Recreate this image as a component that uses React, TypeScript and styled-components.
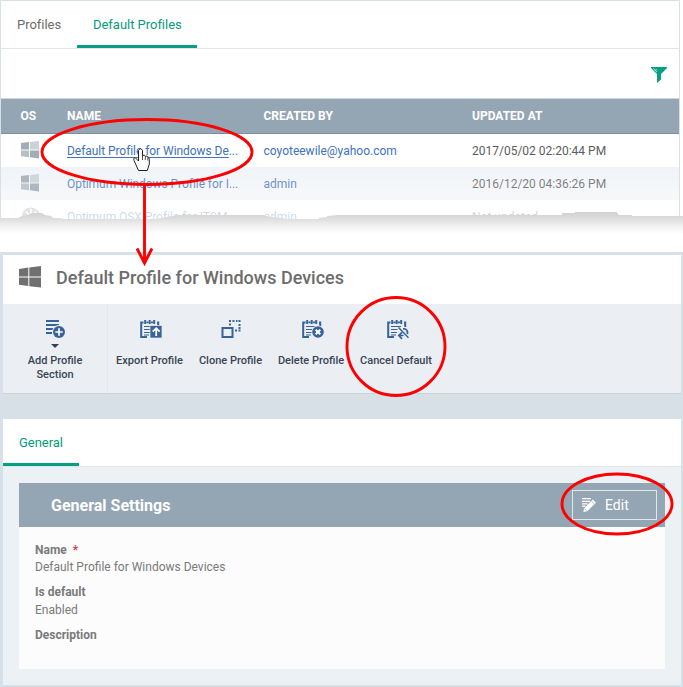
import React from "react";
import styled, { createGlobalStyle } from "styled-components";

const Global = createGlobalStyle`
  * { box-sizing: border-box; }
  html, body { margin: 0; padding: 0; background: #fff; }
  body { font-family: Roboto, "Liberation Sans", sans-serif; overflow: hidden; }
  svg { display: block; flex: none; }
`;

const Page = styled.div`
  position: relative;
  width: 683px;
  height: 687px;
  overflow: hidden;
  display: flex;
  flex-direction: column;
  background: #fff;
`;

const ListPanel = styled.section`
  width: 680px;
  height: 218px;
  margin-bottom: 34px;
  border: 1px solid #d7dfe7;
  border-bottom: 0;
  background: #fff;
`;

const TabBar = styled.nav`
  display: flex;
  height: 48px;
  background: #fff;
  border-bottom: 1px solid #e3e6e8;
`;

const Tab = styled.div<{ $active?: boolean; $width: number }>`
  width: ${(p) => p.$width}px;
  height: 47px;
  padding-left: 16px;
  font-size: 13px;
  line-height: 47px;
  letter-spacing: -0.03px;
  color: ${(p) => (p.$active ? "#069b7d" : "#6c6c6c")};
  border-bottom: ${(p) => (p.$active ? "3px solid #069f82" : "0")};
  white-space: nowrap;
`;

const FilterBar = styled.div`
  height: 50px;
  display: flex;
  align-items: center;
  justify-content: flex-end;
  padding: 2px 12px 0 0;
  border-bottom: 1px solid #cfd7de;
`;

const columns = "66px 196.5px 208.5px 1fr";

const HeadRow = styled.div`
  display: grid;
  grid-template-columns: ${columns};
  height: 35px;
  line-height: 34px;
  background: #94a5b3;
  border-bottom: 1px solid #7890a3;
  color: #fff;
  font-size: 12px;
  font-weight: 700;
`;

const HeadCell = styled.div<{ $first?: boolean }>`
  padding-left: ${(p) => (p.$first ? 19.5 : 0)}px;
`;

const Row = styled.div<{ $fade: number; $bg: string }>`
  display: grid;
  grid-template-columns: ${columns};
  height: 33px;
  line-height: 35px;
  font-size: 12px;
  background: ${(p) => p.$bg};
  color: rgba(92, 92, 92, ${(p) => p.$fade});
  --link: rgba(62, 114, 188, ${(p) => p.$fade});
`;

const IconCell = styled.div`
  padding: 7px 0 0 20px;
  height: 33px;
`;

const LinkCell = styled.div<{ $underline?: boolean; $tight?: boolean }>`
  color: var(--link);
  letter-spacing: ${(p) => (p.$tight ? -0.055 : 0)}px;
  white-space: nowrap;
  span { text-decoration: ${(p) => (p.$underline ? "underline" : "none")}; text-underline-offset: 2px; }
`;

const DateCell = styled.div``;

const Detail = styled.section`
  width: 683px;
  height: 435px;
  padding: 3px 2px 2px 3px;
  background: #d8e0e7;
`;

const TitleBar = styled.header`
  display: flex;
  height: 49px;
  padding: 0 0 5px 16px;
  align-items: center;
  gap: 15px;
  background: #fff;
`;

const Title = styled.h1`
  margin: 0;
  font-size: 18px;
  font-weight: 500;
  color: #6c6c6c;
`;

const Toolbar = styled.div`
  display: flex;
  height: 90px;
  background: #ebeff4;
  border-bottom: 1px solid #c9d3da;
`;

const Action = styled.div<{ $width: number; $divider?: boolean }>`
  width: ${(p) => p.$width}px;
  padding-top: 15px;
  border-right: ${(p) => (p.$divider ? "1px solid #e3e8ed" : "0")};
  display: flex;
  flex-direction: column;
  align-items: center;
  text-align: center;
  font-size: 11px;
  line-height: 14px;
  font-weight: 500;
  color: #3a4452;
  white-space: nowrap;
`;

const ActionIcon = styled.div<{ $nudge?: number }>`
  height: 20px;
  margin-left: ${(p) => p.$nudge ?? 2}px;
`;

const Caret = styled.div`
  width: 0;
  height: 0;
  margin: 5px 0 -9px;
  border: 4px solid transparent;
  border-top-color: #36404e;
  border-bottom: 0;
`;

const ActionLabel = styled.div`
  margin-top: 15px;
`;

const Tabs = styled(TabBar)`
  margin-top: 25px;
`;

const Content = styled.div`
  height: 218px;
  padding: 16px;
  background: #ecf1f5;
`;

const Card = styled.div`
  height: 186px;
  background: #fcfcfc;
`;

const CardHead = styled.div`
  height: 44px;
  display: flex;
  align-items: center;
  justify-content: space-between;
  padding: 0 8px 0 32px;
  background: #94a5b3;
  color: #fff;
  font-size: 16px;
  font-weight: 700;
`;

const EditButton = styled.button`
  width: 85px;
  height: 30px;
  padding: 0 0 0 9px;
  display: flex;
  align-items: center;
  gap: 8px;
  background: transparent;
  border: 1px solid #e2e7ea;
  color: #fff;
  font: 400 14px Roboto, sans-serif;
`;

const Fields = styled.dl`
  margin: 0;
  padding: 15px 16px;
  font-size: 12px;
  line-height: 17px;
  color: #7a7a7a;
`;

const Label = styled.dt<{ $after?: number }>`
  margin-bottom: ${(p) => p.$after || 0}px;
  font-weight: 700;
`;

const Required = styled.span`
  margin-left: 6px;
  color: #d43c3c;
`;

const Value = styled.dd<{ $gap?: number }>`
  margin: 0 0 ${(p) => p.$gap || 0}px;
`;

const Overlay = styled.svg`
  position: absolute;
  left: 0;
  top: 0;
  pointer-events: none;
`;

const WindowsIcon = ({ size, color }: { size: number; color: string }) => (
  <svg width={size} height={size} viewBox="0 0 22 22" fill={color}>
    <path d="M0 3 9.3 1.6V10.4H0ZM10.3 1.4 22 0V10.4H10.3ZM0 11.4H9.3V20L0 18.8ZM10.3 11.4H22V21.6L10.3 20.2Z" />
  </svg>
);

const RowWindows = ({ opacity }: { opacity: number }) => (
  <svg width="18" height="18" viewBox="0 0 18 18" opacity={opacity}>
    <path fill="#a0adb6" d="M0 2 8 1V8.4H0ZM9 9.4H18V17.4L9 16.2Z" />
    <path fill="#b4bfc6" d="M0 9.4H8V16.2L0 15.2Z" />
    <path fill="#cbd2d6" d="M9 .9 18 0V8.4H9Z" />
  </svg>
);

const AppleGlobe = () => (
  <svg width="20" height="20" viewBox="0 0 20 20">
    <circle cx="10" cy="10" r="9.5" fill="#e3e4e5" />
    <path d="M5 4.5 9 9M15 4.5 11 9M10 2V8M3 10H17" stroke="#fff" strokeWidth="1.8" />
  </svg>
);

const Funnel = () => (
  <svg width="16" height="16" viewBox="0 0 16 16">
    <path d="M0 0H16V1L10 7V12.5L6 16V7L0 1Z" fill="#069f82" />
    <path d="M2.3 1.6 6 5.2M4.5 1.8 6 3.5" stroke="#bfe8df" strokeWidth="1" />
  </svg>
);

const BLUE = "#376399";
const BG = "#ebeff4";

const AddIcon = () => (
  <svg width="20" height="20" viewBox="0 0 20 20">
    <path d="M0 2H13M0 6H13M0 10H8M0 14H6" stroke={BLUE} strokeWidth="2" />
    <circle cx="13" cy="13" r="7" fill={BG} />
    <circle cx="13" cy="13" r="6" fill={BLUE} />
    <path d="M13 9.3V16.7M9.3 13H16.7" stroke="#fff" strokeWidth="1.7" />
  </svg>
);

const Notepad = () => (
  <g>
    <path d="M7 18H1.2V3.6H3.5M17 3.6H18.2V8" fill="none" stroke={BLUE} strokeWidth="2" />
    <path d="M5.2 1V5M9.7 1V5M14.2 1V5" stroke={BLUE} strokeWidth="2" />
    <path d="M6.5 3.4H8.7M11 3.4H13.2" stroke={BLUE} strokeWidth="1.6" />
    <path d="M4 7.5H14M4 10.5H13M4 13.5H10M4 16H9" stroke={BLUE} strokeWidth="1.2" />
  </g>
);

const ExportIcon = () => (
  <svg width="22" height="20" viewBox="0 0 22 20">
    <Notepad />
    <path d="M10 6.5H22V19H10Z" fill={BLUE} stroke={BG} strokeWidth=".7" />
    <path d="M16.2 17V9.5M12.7 12.7 16.2 9.2 19.7 12.7" stroke="#fff" strokeWidth="1.8" fill="none" />
  </svg>
);

const CloneIcon = () => (
  <svg width="20" height="20" viewBox="0 0 20 20">
    <path d="M1.5 9H11.5V18H1.5Z" fill="none" stroke={BLUE} strokeWidth="2" />
    <path d="M8 2H10M11.5 2H13.5M15 2H16.5M17.5 2H19.5M17.5 6H19.5M17.5 9H19.5M17.5 11.5H19.5M14 11.5H16M8 5.5H10" fill="none" stroke={BLUE} strokeWidth="1.8" />
  </svg>
);

const DeleteIcon = () => (
  <svg width="22" height="20" viewBox="0 0 22 20">
    <Notepad />
    <circle cx="16" cy="13" r="6.6" fill={BG} />
    <circle cx="16" cy="13" r="5.8" fill={BLUE} />
    <path d="M13.7 10.7 18.3 15.3M18.3 10.7 13.7 15.3" stroke="#fff" strokeWidth="2" />
  </svg>
);

const CancelIcon = () => (
  <svg width="22" height="22" viewBox="0 0 22 22">
    <Notepad />
    <path d="M10.5 9H22V22H10.5Z" fill={BG} />
    <path d="M11.5 8.5 21.5 18.8" stroke={BLUE} strokeWidth="1.5" />
    <path d="M16 9.8H17.5Q21.3 11 20.3 15M12 16.5H16.5M15 13.3 11.8 16.5 15 19.8" fill="none" stroke={BLUE} strokeWidth="1.7" />
  </svg>
);

const EditIcon = () => (
  <svg width="15" height="15" viewBox="0 0 15 15">
    <path d="M0 .7H9M0 3.3H8M0 5.8H5.5M0 8.2H3.5" stroke="#fff" strokeWidth="1.2" />
    <path d="M1.3 14 2.2 10.2 10.8 1.6 14 4.8 5.2 13.3Z" fill="#fff" />
    <path d="M9.4 3 12.6 6.2M2.4 10.5 4.9 13" stroke="#94a5b3" strokeWidth=".7" />
  </svg>
);

const TornEdge = () => (
  <svg width="683" height="28" viewBox="0 210 683 28">
    <defs>
      <linearGradient id="tear" gradientUnits="userSpaceOnUse" x1="0" y1="213" x2="0" y2="234">
        <stop offset="0" stopColor="#d2d2d2" />
        <stop offset=".2" stopColor="#dadada" />
        <stop offset=".6" stopColor="#f0f0f0" />
        <stop offset="1" stopColor="#fff" />
      </linearGradient>
    </defs>
    <path
      fill="url(#tear)"
      d="M0 218H18L22 216 28 215 32 213H42L45 215 51 216 53 218H60L64 219H156L166 217 178 215H263L270 217 282 218 286 219H319V218L327 217V216L338 215H562V213H575V212H617V213L619 215H632V216H683V238H0Z"
    />
  </svg>
);

const TearHolder = styled.div`
  position: absolute;
  left: 0;
  top: 210px;
`;

export default function App() {
  return (
    <>
      <Global />
      <Page>
        <ListPanel>
          <TabBar>
            <Tab $width={76}>Profiles</Tab>
            <Tab $active $width={120}>Default Profiles</Tab>
          </TabBar>
          <FilterBar><Funnel /></FilterBar>
          <HeadRow>
            <HeadCell $first>OS</HeadCell>
            <HeadCell>NAME</HeadCell>
            <HeadCell>CREATED BY</HeadCell>
            <HeadCell>UPDATED AT</HeadCell>
          </HeadRow>
          <Row $fade={1} $bg="#fff">
            <IconCell><RowWindows opacity={1} /></IconCell>
            <LinkCell $underline $tight><span>Default Profile for Windows De</span>...</LinkCell>
            <LinkCell>coyoteewile@yahoo.com</LinkCell>
            <DateCell>2017/05/02 02:20:44 PM</DateCell>
          </Row>
          <Row $fade={0.78} $bg="linear-gradient(#f0f4f8, #f7f8fa)">
            <IconCell><RowWindows opacity={0.85} /></IconCell>
            <LinkCell $tight>Optimum Windows Profile for I...</LinkCell>
            <LinkCell>admin</LinkCell>
            <DateCell>2016/12/20 04:36:26 PM</DateCell>
          </Row>
          <Row $fade={0.28} $bg="#fff">
            <IconCell><AppleGlobe /></IconCell>
            <LinkCell $tight>Optimum OSX Profile for ITSM...</LinkCell>
            <LinkCell>admin</LinkCell>
            <DateCell>Not updated</DateCell>
          </Row>
        </ListPanel>

        <Detail>
          <TitleBar>
            <WindowsIcon size={22} color="#707070" />
            <Title>Default Profile for Windows Devices</Title>
          </TitleBar>
          <Toolbar>
            <Action $width={105} $divider>
              <ActionIcon $nudge={1}><AddIcon /></ActionIcon>
              <Caret />
              <ActionLabel>Add Profile<br />Section</ActionLabel>
            </Action>
            <Action $width={83}><ActionIcon><ExportIcon /></ActionIcon><ActionLabel>Export Profile</ActionLabel></Action>
            <Action $width={79}><ActionIcon $nudge={0}><CloneIcon /></ActionIcon><ActionLabel>Clone Profile</ActionLabel></Action>
            <Action $width={82}><ActionIcon $nudge={4}><DeleteIcon /></ActionIcon><ActionLabel>Delete Profile</ActionLabel></Action>
            <Action $width={88}><ActionIcon $nudge={3}><CancelIcon /></ActionIcon><ActionLabel>Cancel Default</ActionLabel></Action>
          </Toolbar>
          <Tabs>
            <Tab $active $width={76}>General</Tab>
          </Tabs>
          <Content>
            <Card>
              <CardHead>
                General Settings
                <EditButton><EditIcon />Edit</EditButton>
              </CardHead>
              <Fields>
                <Label>Name<Required>*</Required></Label>
                <Value $gap={8}>Default Profile for Windows Devices</Value>
                <Label $after={1}>Is default</Label>
                <Value $gap={8}>Enabled</Value>
                <Label>Description</Label>
              </Fields>
            </Card>
          </Content>
        </Detail>

        <TearHolder><TornEdge /></TearHolder>
        <Overlay width="683" height="687" viewBox="0 0 683 687">
          <g fill="none" stroke="#fd0000" strokeWidth="2.9">
            <ellipse cx="147" cy="152" rx="105" ry="32.5" />
            <path d="M144.5 184V261" />
            <path d="M137 248.5 144.5 263 152 248.5" />
            <circle cx="396" cy="346.5" r="49" />
            <ellipse cx="617" cy="504" rx="55" ry="30" />
          </g>
          <path
            d="M138.5 150.5Q140.5 147 142.5 150.5V155.5Q144.5 154.5 145.3 156.3 147.3 155.3 147.8 157.2 149.3 156.5 149.3 159.5V164L147.3 170.5H138.5L134 160.5Q133 158 135 157.5L138.5 161Z"
            fill="#fff"
            stroke="#222"
            strokeWidth="1"
          />
          <path d="M142.5 155V160M145.3 156.5V160M147.8 157.5V160.5" stroke="#222" strokeWidth=".8" />
        </Overlay>
      </Page>
    </>
  );
}
